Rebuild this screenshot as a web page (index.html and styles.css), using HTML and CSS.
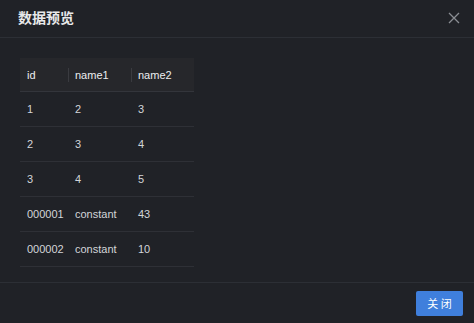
FILE: index.html
```html
<!DOCTYPE html>
<html lang="zh-CN">
<head>
    <meta charset="UTF-8">
    <title>数据预览</title>
    <link rel="stylesheet" href="styles.css">
</head>
<body>
    <div class="modal">
        <div class="modal-header">
            <span class="modal-title">数据预览</span>
            <span class="modal-close">
                <svg width="12" height="12" viewBox="0 0 12 12"><path d="M1 1L11 11M11 1L1 11" stroke="#8a8d93" stroke-width="1.3" fill="none"/></svg>
            </span>
        </div>
        <div class="modal-body">
            <table class="preview">
                <thead>
                    <tr><th>id</th><th>name1</th><th>name2</th></tr>
                </thead>
                <tbody>
                    <tr><td>1</td><td>2</td><td>3</td></tr>
                    <tr><td>2</td><td>3</td><td>4</td></tr>
                    <tr><td>3</td><td>4</td><td>5</td></tr>
                    <tr><td>000001</td><td>constant</td><td>43</td></tr>
                    <tr><td>000002</td><td>constant</td><td>10</td></tr>
                </tbody>
            </table>
        </div>
        <div class="modal-footer">
            <button class="btn-primary">关 闭</button>
        </div>
    </div>
</body>
</html>
```

FILE: styles.css
```css
body {
    margin: 0;
    background: #202227;
    font-family: "Liberation Sans", "Noto Sans CJK SC", sans-serif;
    color: #d6d8dc;
}

.modal {
    width: 474px;
    height: 323px;
    display: flex;
    flex-direction: column;
}

.modal-header {
    height: 38px;
    box-sizing: border-box;
    border-bottom: 1px solid #2c2f35;
    display: flex;
    align-items: center;
    justify-content: space-between;
    padding: 0 14px 0 18px;
}

.modal-title {
    font-size: 14px;
    font-weight: bold;
    color: #e8e9eb;
    font-family: "Noto Sans CJK SC", sans-serif;
    margin-top: -3px;
}

.modal-close {
    display: flex;
    margin-top: -2px;
}

.modal-body {
    flex: 1;
    padding: 20px 20px 0 20px;
}

.preview {
    border-collapse: collapse;
    table-layout: fixed;
    width: 174px;
    font-size: 11px;
}

.preview th {
    background: #26272b;
    font-weight: normal;
    text-align: left;
    height: 33px;
    padding: 0 7px;
    color: #eceef0;
    position: relative;
    border-bottom: 1px solid #33353b;
}

.preview th + th::before {
    content: "";
    position: absolute;
    left: 0;
    top: 10px;
    height: 14px;
    width: 1px;
    background: #3a3b40;
}

.preview td {
    height: 34px;
    padding: 0 7px;
    border-bottom: 1px solid #2e3036;
    color: #d3d5d9;
    white-space: nowrap;
}

.preview th:nth-child(1) { width: 34px; }
.preview th:nth-child(2) { width: 49px; }
.preview th:nth-child(3) { width: 49px; }

.modal-footer {
    height: 40px;
    border-top: 1px solid #2c2f35;
    display: flex;
    align-items: center;
    justify-content: flex-end;
    padding: 0 11px;
}

.btn-primary {
    background: #3f7fdc;
    color: #fff;
    border: none;
    border-radius: 2px;
    width: 47px;
    height: 25px;
    font-size: 11px;
    font-family: "Noto Sans CJK SC", sans-serif;
}
```
